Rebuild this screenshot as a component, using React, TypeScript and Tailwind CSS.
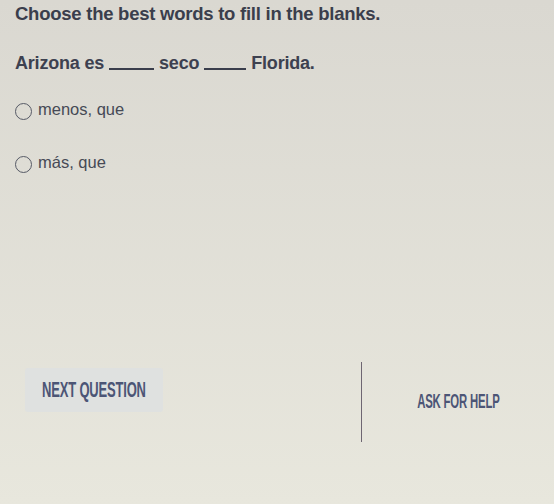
import React from 'react';

const options = ['menos, que', 'más, que'];

const Blank: React.FC<{ w: number }> = ({ w }) => (
  <span className="inline-block h-[2px] bg-[#3a3e4c] mx-[5px] align-[-1px]" style={{ width: w }} />
);

const App: React.FC = () => {
  const [selected, setSelected] = React.useState<number | null>(null);

  return (
    <div className="w-[554px] h-[504px] overflow-hidden bg-gradient-to-b from-[#dad8d1] to-[#e8e7dd] text-[#3a3e4c] font-['Liberation_Sans',Arial,sans-serif]">
      <div className="px-[15px] pt-[3px]">
        <h1 className="text-[18.5px] font-bold leading-[22px] tracking-[-0.25px]">
          Choose the best words to fill in the blanks.
        </h1>

        <p className="mt-[27px] text-[18px] font-bold leading-[22px] tracking-[-0.2px] text-[#3d4150]">
          Arizona es
          <Blank w={45} />
          seco
          <Blank w={42} />
          Florida.
        </p>

        <div className="mt-[29px] flex flex-col gap-[36px]">
          {options.map((opt, i) => (
            <label key={opt} className="flex items-center gap-[6px] cursor-pointer" onClick={() => setSelected(i)}>
              <span className="w-[17px] h-[17px] rounded-full border-[1.5px] border-[#565a66] flex items-center justify-center">
                {selected === i && <span className="w-[9px] h-[9px] rounded-full bg-[#565a66]" />}
              </span>
              <span className="text-[16.5px] leading-[18px] text-[#464a56] -mt-[6px]">{opt}</span>
            </label>
          ))}
        </div>
      </div>

      <div className="mt-[189px] flex items-start">
        <button className="ml-[25px] mt-[6px] w-[138px] h-[44px] rounded-[3px] bg-[#dfe1e0] text-[#4c5576] flex items-center justify-center">
          <span className="inline-block text-[22px] font-bold leading-none tracking-[-0.3px] scale-x-[0.59] whitespace-nowrap">NEXT QUESTION</span>
        </button>
        <div className="ml-[198px] w-[1px] h-[80px] bg-[#6e6672]" />
        <div className="flex-1 h-[80px] flex items-center justify-center">
          <button className="text-[#4c5576]">
            <span className="inline-block text-[21px] font-bold leading-none tracking-[-0.3px] scale-x-[0.54] whitespace-nowrap">ASK FOR HELP</span>
          </button>
        </div>
      </div>
    </div>
  );
};

export default App;
